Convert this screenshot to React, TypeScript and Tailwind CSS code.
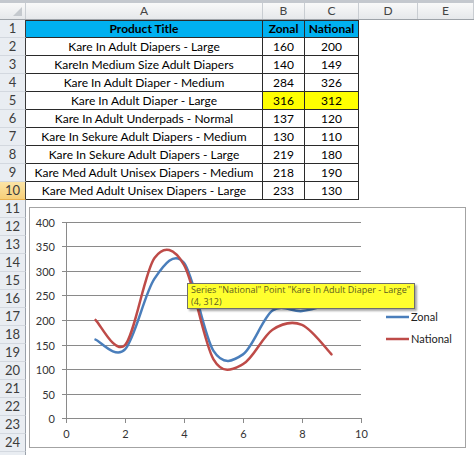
import React from 'react';

// --- Sheet data ---
type Row = { title: string; zonal: string; national: string; head?: boolean; mark?: boolean };

const rows: Row[] = [
  { title: 'Product Title', zonal: 'Zonal', national: 'National', head: true },
  { title: 'Kare In Adult Diapers - Large', zonal: '160', national: '200' },
  { title: 'KareIn Medium Size Adult Diapers', zonal: '140', national: '149' },
  { title: 'Kare In Adult Diaper - Medium', zonal: '284', national: '326' },
  { title: 'Kare In Adult Diaper - Large', zonal: '316', national: '312', mark: true },
  { title: 'Kare In Adult Underpads - Normal', zonal: '137', national: '120' },
  { title: 'Kare In Sekure Adult Diapers - Medium', zonal: '130', national: '110' },
  { title: 'Kare In Sekure Adult Diapers - Large', zonal: '219', national: '180' },
  { title: 'Kare Med Adult Unisex Diapers - Medium', zonal: '218', national: '190' },
  { title: 'Kare Med Adult Unisex Diapers - Large', zonal: '233', national: '130' },
];

const zonal = [160, 140, 284, 316, 137, 130, 219, 218, 233];
const national = [200, 149, 326, 312, 120, 110, 180, 190, 130];

// page coordinates of the plot area
const X = (v: number) => 66 + v * 29.5;
const Y = (v: number) => 418.3 - v * 0.4918;

// Catmull-Rom -> cubic bezier, like Excel's "smoothed line"
function smoothPath(data: number[]) {
  const pts = data.map((v, i) => [X(i + 1), Y(v)]);
  let d = `M${pts[0][0]},${pts[0][1]}`;
  for (let i = 0; i < pts.length - 1; i++) {
    const p0 = pts[i - 1] ?? pts[i];
    const p1 = pts[i];
    const p2 = pts[i + 1];
    const p3 = pts[i + 2] ?? p2;
    const c1x = p1[0] + (p2[0] - p0[0]) / 6;
    const c1y = p1[1] + (p2[1] - p0[1]) / 6;
    const c2x = p2[0] - (p3[0] - p1[0]) / 6;
    const c2y = p2[1] - (p3[1] - p1[1]) / 6;
    d += ` C${c1x},${c1y} ${c2x},${c2y} ${p2[0]},${p2[1]}`;
  }
  return d;
}

const ColHeader: React.FC<{ label: string; className: string }> = ({ label, className }) => (
  <div className={`${className} h-full flex items-center justify-center border-r border-[#c9cdd2] text-[12px] text-[#444]`}>
    {label}
  </div>
);

const SheetRow: React.FC<{ n?: number; row?: Row }> = ({ n, row }) => {
  const inTable = !!row;
  const rowHead =
    n === 10
      ? 'bg-linear-to-b from-[#fbe4a6] to-[#f7cf78] border-b border-[#e8b04f]'
      : 'bg-[#e9edf2] border-b border-[#d3d8df]';
  const cell = inTable ? 'border-r border-b border-[#2a2a2a]' : '';
  const fill = row?.head ? 'bg-[#00b0f0] font-bold' : '';
  const num = row?.mark ? 'bg-[#ffff00]' : fill;
  const top = row?.head ? 'border-t' : '';
  return (
    <div className="flex h-[18px] shrink-0">
      <div
        className={`w-[26px] shrink-0 flex items-center justify-center text-[13px] text-[#3d3d3d] border-r ${
          inTable ? 'border-r-[#3a3a3a]' : 'border-r-[#9aa1aa]'
        } ${rowHead}`}
      >
        {n}
      </div>
      <div className={`w-[237px] shrink-0 flex items-center justify-center whitespace-nowrap overflow-hidden text-[12px] ${cell} ${fill} ${top}`}>
        {row?.title}
      </div>
      <div className={`w-[42px] shrink-0 flex items-center justify-center text-[12px] ${cell} ${num} ${top}`}>
        {row?.zonal}
      </div>
      <div className={`w-[54px] shrink-0 flex items-center justify-center text-[12px] ${cell} ${num} ${top}`}>
        {row?.national}
      </div>
      <div className="w-[59px] shrink-0" />
      <div className="flex-1" />
    </div>
  );
};

// --- Chart object floating over rows 11-24 ---
const Chart: React.FC = () => {
  const grid = [0, 50, 100, 150, 200, 250, 300, 350, 400];
  const xt = [0, 2, 4, 6, 8, 10];
  return (
    <div className="absolute left-[29px] top-[207px] w-[437px] h-[241px] border border-[#a3a3a3] bg-white">
      <svg className="absolute -left-px -top-px" width={437} height={241} viewBox="29 207 437 241">
        {grid.map(v => {
          const y = Math.round(Y(v)) + 0.5;
          return (
            <g key={v}>
              <line x1={62} x2={X(10)} y1={y} y2={y} stroke="#8a8a8a" strokeWidth={1} />
              <text x={55} y={y + 4} textAnchor="end" fontSize={11} fill="#333" fontFamily="Lato, sans-serif">
                {v}
              </text>
            </g>
          );
        })}
        <line x1={66.5} x2={66.5} y1={Math.round(Y(400))} y2={Math.round(Y(0)) + 1} stroke="#8a8a8a" />
        {xt.map(v => {
          const x = Math.round(X(v)) + 0.5;
          return (
            <g key={v}>
              <line x1={x} x2={x} y1={Math.round(Y(0))} y2={Math.round(Y(0)) + 5} stroke="#8a8a8a" />
              <text x={x} y={438} textAnchor="middle" fontSize={11} fill="#333" fontFamily="Lato, sans-serif">
                {v}
              </text>
            </g>
          );
        })}
        <path d={smoothPath(zonal)} fill="none" stroke="#4a7ebb" strokeWidth={2.5} strokeLinecap="round" />
        <path d={smoothPath(national)} fill="none" stroke="#be4b48" strokeWidth={2.5} strokeLinecap="round" />
        {/* legend */}
        <line x1={386} x2={409} y1={317} y2={317} stroke="#4a7ebb" strokeWidth={2.5} />
        <text x={411} y={321} fontSize={11} fill="#222" fontFamily="Lato, sans-serif">Zonal</text>
        <line x1={386} x2={409} y1={339} y2={339} stroke="#be4b48" strokeWidth={2.5} />
        <text x={411} y={343} fontSize={11} fill="#222" fontFamily="Lato, sans-serif">National</text>
      </svg>
    </div>
  );
};

const App: React.FC = () => {
  const extra = Array.from({ length: 14 }, (_, i) => i + 11);
  return (
    <div className="relative w-[474px] h-[455px] overflow-hidden bg-white text-black font-['Lato',sans-serif]">
      <div className="h-[3px] bg-[#c4c8ce]" />
      {/* column headers */}
      <div className="flex h-[17px] bg-linear-to-b from-[#f9f9f9] to-[#e6e8eb] border-b border-[#9ea3a9]">
        <div className="w-[26px] shrink-0 h-full border-r border-[#c9cdd2] relative">
          <svg className="absolute right-[3px] bottom-[3px]" width={9} height={9} viewBox="0 0 9 9">
            <polygon points="9,0 9,9 0,9" fill="#c5c9ce" />
          </svg>
        </div>
        <ColHeader label="A" className="w-[237px] shrink-0" />
        <ColHeader label="B" className="w-[42px] shrink-0" />
        <ColHeader label="C" className="w-[54px] shrink-0" />
        <ColHeader label="D" className="w-[59px] shrink-0" />
        <ColHeader label="E" className="flex-1" />
      </div>
      {rows.map((r, i) => (
        <SheetRow key={i} n={i + 1} row={r} />
      ))}
      {extra.map(n => (
        <SheetRow key={n} n={n} />
      ))}
      <SheetRow />
      <Chart />
      {/* data point tooltip */}
      <div className="absolute left-[187px] top-[283px] w-[228px] h-[26px] border border-[#6e6e6e] bg-[#ffff2e] shadow-[2px_2px_2px_rgba(0,0,0,0.35)] px-[3px] text-[9px] leading-[12px] text-[#5c5c1e] font-['Open_Sans',sans-serif] whitespace-nowrap">
        <div>Series "National" Point "Kare In Adult Diaper - Large"</div>
        <div>(4, 312)</div>
      </div>
    </div>
  );
};

export default App;
